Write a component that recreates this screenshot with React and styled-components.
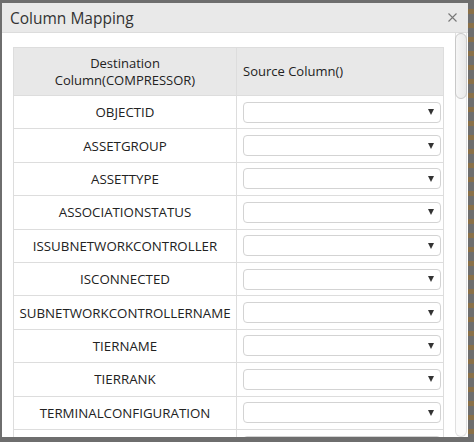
import React from 'react';
import styled, { createGlobalStyle } from 'styled-components';

const Global = createGlobalStyle`
  html, body {
    margin: 0;
    padding: 0;
    width: 474px;
    height: 442px;
    overflow: hidden;
    background: #6e6e6e;
  }
`;

const Page = styled.div`
  display: flex;
  width: 474px;
  height: 442px;
  padding: 3px 0 5px 2px;
  box-sizing: border-box;
  background:
    repeating-linear-gradient(180deg, #6e6e6e 0 9px, #8a7048 9px 14px) right top / 6px 100% no-repeat,
    #6e6e6e;
  font-family: 'Open Sans', 'Noto Sans', sans-serif;
`;

const Dialog = styled.div`
  display: flex;
  flex-direction: column;
  width: 466px;
  height: 434px;
  background: #fff;
  overflow: hidden;
`;

const Header = styled.div`
  display: flex;
  align-items: center;
  justify-content: space-between;
  height: 29px;
  padding: 0 11px 0 8px;
  background: #e9e9e9;
  border-bottom: 1px solid #dcdcdc;
  flex: none;
`;

const Title = styled.div`
  font-size: 15.5px;
  color: #333;
`;

const Close = styled.button`
  border: none;
  background: none;
  padding: 0;
  display: flex;
  cursor: pointer;
`;

const Main = styled.div`
  flex: 1;
  display: flex;
  min-height: 0;
`;

const Content = styled.div`
  flex: 1;
  overflow: hidden;
  padding: 14px 0 0 11px;
`;

const Track = styled.div`
  display: flex;
  flex-direction: column;
  width: 12px;
  box-sizing: border-box;
  border: 1px solid #e0e0e0;
  border-top: none;
  border-radius: 0 0 6px 6px;
  background: #fbfbfb;
  margin-right: 1px;
`;

const Thumb = styled.div`
  height: 64px;
  margin: 0 -1px;
  border: 1px solid #c9c9c9;
  border-radius: 6px;
  background: linear-gradient(90deg, #f6f6f6, #e9e9e9);
`;

const Table = styled.table`
  width: 430px;
  border-collapse: collapse;
  table-layout: fixed;
  color: #222;
`;

const Th = styled.th`
  height: 47px;
  background: #e8e8e8;
  border: 1px solid #dddddd;
  font-size: 13px;
  font-weight: 400;
  line-height: 17px;
  text-align: ${p => p.$align || 'center'};
  padding: 0 ${p => (p.$align === 'left' ? '6px' : '4px')};
`;

const Td = styled.td`
  height: 32.4px;
  border: 1px solid #dddddd;
  font-size: 13.3px;
  text-align: center;
  padding: 0 2px;
  white-space: nowrap;
`;

const SelectCell = styled.td`
  height: 32.4px;
  border: 1px solid #dddddd;
  padding: 0 2px 0 6px;
`;

const Select = styled.div`
  display: flex;
  align-items: center;
  justify-content: flex-end;
  height: 19px;
  border: 1px solid #d3d3d3;
  border-radius: 4px;
  padding-right: 6px;
  background: #fff;
`;

const Arrow = styled.span`
  width: 0;
  height: 0;
  border-left: 3px solid transparent;
  border-right: 3px solid transparent;
  border-top: 6px solid #333;
`;

const columns = [
  'OBJECTID',
  'ASSETGROUP',
  'ASSETTYPE',
  'ASSOCIATIONSTATUS',
  'ISSUBNETWORKCONTROLLER',
  'ISCONNECTED',
  'SUBNETWORKCONTROLLERNAME',
  'TIERNAME',
  'TIERRANK',
  'TERMINALCONFIGURATION',
  'GLOBALID',
];

export default function App() {
  return (
    <>
      <Global />
      <Page>
        <Dialog>
          <Header>
            <Title>Column Mapping</Title>
            <Close aria-label="close">
              <svg width="9" height="9" viewBox="0 0 9 9">
                <path d="M0.5 0.5 L8.5 8.5 M8.5 0.5 L0.5 8.5" stroke="#777" strokeWidth="1.1" />
              </svg>
            </Close>
          </Header>
          <Main>
            <Content>
              <Table>
                <colgroup>
                  <col style={{ width: 223 }} />
                  <col style={{ width: 207 }} />
                </colgroup>
                <thead>
                  <tr>
                    <Th>Destination<br />Column(COMPRESSOR)</Th>
                    <Th $align="left">Source Column()</Th>
                  </tr>
                </thead>
                <tbody>
                  {columns.map(name => (
                    <tr key={name}>
                      <Td>{name}</Td>
                      <SelectCell>
                        <Select><Arrow /></Select>
                      </SelectCell>
                    </tr>
                  ))}
                </tbody>
              </Table>
            </Content>
            <Track>
              <Thumb />
            </Track>
          </Main>
        </Dialog>
      </Page>
    </>
  );
}
